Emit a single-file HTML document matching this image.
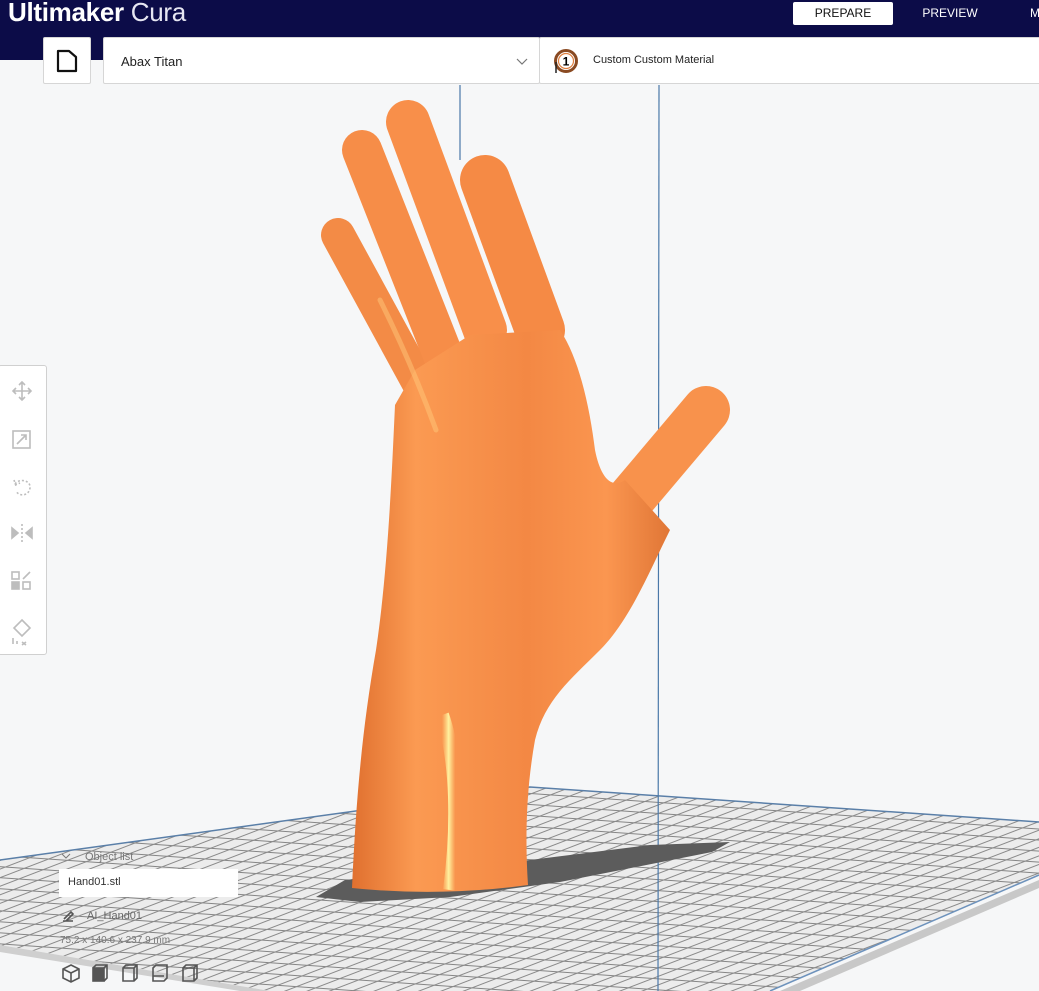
<!DOCTYPE html>
<html><head><meta charset="utf-8"><style>
html,body{margin:0;padding:0;width:1039px;height:991px;overflow:hidden;background:#f6f7f8;font-family:"Liberation Sans",sans-serif}
.hdr{position:absolute;left:0;top:0;width:1039px;height:60px;background:#0c0c48}
.logo{position:absolute;left:8px;top:-3px;color:#fff;font-size:26px;letter-spacing:-0.3px}
.logo b{font-weight:bold}
.logo span{font-weight:normal;color:#e6e6f2}
.tab{position:absolute;top:2px;height:23px;line-height:23px;font-size:12px;text-align:center;color:#fff}
.box{position:absolute;top:37px;height:47px;background:#fff;border:1px solid #d6d6d6;box-sizing:border-box;border-radius:2px}
.lbl{position:absolute;font-size:13px;color:#222;white-space:nowrap}
.tools{position:absolute;left:-2px;top:365px;width:49px;height:290px;background:#fff;border:1px solid #d0d0d0;border-radius:3px;box-sizing:border-box}
</style></head><body>
<svg width="1039" height="991" style="position:absolute;left:0;top:0">
<defs>
<clipPath id="plate"><polygon points="0,860 530,787 1039,822 1039,875 770,991 270,991 0,945"/></clipPath>
<pattern id="ga" width="40" height="11" patternUnits="userSpaceOnUse" patternTransform="translate(0,800) rotate(4)">
<rect x="0" y="0" width="40" height="1" fill="#858585"/></pattern>
<pattern id="gb" width="40" height="8" patternUnits="userSpaceOnUse" patternTransform="translate(0,860) rotate(-21)">
<rect x="0" y="0" width="40" height="1" fill="#8a8a8a"/></pattern>
<linearGradient id="skin" x1="0" y1="0" x2="1" y2="0">
<stop offset="0" stop-color="#e0702f"/><stop offset="0.2" stop-color="#fb9a52"/><stop offset="0.55" stop-color="#f38844"/><stop offset="0.8" stop-color="#fb9650"/><stop offset="1" stop-color="#e07636"/></linearGradient>
<linearGradient id="hl" x1="0" y1="0" x2="1" y2="0"><stop offset="0" stop-color="#ffe590" stop-opacity="0"/><stop offset="0.5" stop-color="#fff2a0"/><stop offset="1" stop-color="#ffe590" stop-opacity="0"/></linearGradient>
</defs>
<polygon points="0,860 530,787 1039,822 1039,875 770,991 270,991 0,945" fill="#ececec"/>
<g clip-path="url(#plate)">
<rect x="0" y="700" width="1039" height="291" fill="url(#ga)"/>
<rect x="0" y="700" width="1039" height="291" fill="url(#gb)"/>
</g>
<polyline points="0,860 530,787 1039,822" fill="none" stroke="#5a7fa8" stroke-width="1.5"/>
<polyline points="1039,875 770,991" fill="none" stroke="#6d92bc" stroke-width="1.5"/>
<polygon points="1039,880 780,991 800,991 1039,888" fill="#c8c8c8"/>
<polygon points="0,945 270,991 240,991 0,952" fill="#cfcfcf"/>
<line x1="460" y1="85" x2="460" y2="160" stroke="#4a78a8" stroke-width="1.2"/>
<line x1="659" y1="85" x2="658" y2="991" stroke="#4a78a8" stroke-width="1.2"/>
<polygon points="316,897 345,880 530,860 650,845 730,842 712,852 560,882 450,897 360,902" fill="#5c5c5c"/>
<g stroke-linecap="round" fill="none">
<line x1="428" y1="400" x2="338" y2="235" stroke-width="34" stroke="#f38b46"/>
<line x1="445" y1="360" x2="362" y2="150" stroke-width="40" stroke="#f68d48"/>
<line x1="485" y1="330" x2="408" y2="122" stroke-width="44" stroke="#f88f4a"/>
<line x1="540" y1="330" x2="485" y2="180" stroke-width="50" stroke="#f58a45"/>
<line x1="630" y1="500" x2="706" y2="410" stroke-width="48" stroke="#f8924c"/>
</g>
<path fill="url(#skin)" d="M352,888 C356,800 362,730 376,650 C388,570 392,470 395,405 L415,370 L470,335 L560,330 C580,360 590,410 595,450 C600,475 610,490 625,480 L670,530 C650,570 630,620 600,650 C570,680 545,700 535,740 C526,790 525,840 528,885 Q440,897 352,888 Z"/>
<path d="M442,715 C458,760 458,830 450,890" stroke="url(#hl)" stroke-width="14" fill="none"/>
<path d="M380,300 C405,350 425,400 436,430" stroke="#ffc77a" stroke-width="5" fill="none" stroke-linecap="round" opacity="0.5"/>
</svg>
<div class="hdr"></div>
<div class="logo"><b>Ultimaker</b> <span>Cura</span></div>
<div class="tab" style="left:793px;width:100px;background:#fff;color:#111;border-radius:2px">PREPARE</div>
<div class="tab" style="left:910px;width:80px">PREVIEW</div>
<div class="tab" style="left:1030px;width:20px;text-align:left">M</div>
<div class="box" style="left:43px;width:48px"><svg width="48" height="47" style="position:absolute;left:-1px;top:-1px"><path d="M15,14 H26 L33,20 V34 H15 Z" fill="none" stroke="#111" stroke-width="2.2" stroke-linejoin="round"/></svg></div>
<div class="box" style="left:103px;width:437px"><div class="lbl" style="left:17px;top:16px">Abax Titan</div><svg width="12" height="8" style="position:absolute;left:412px;top:20px"><path d="M1,1 L6,6 L11,1" fill="none" stroke="#777" stroke-width="1.2"/></svg></div>
<div class="box" style="left:539px;width:510px"><svg width="30" height="30" style="position:absolute;left:13px;top:10px"><circle cx="13" cy="13" r="10.5" fill="#fff" stroke="#8a4a22" stroke-width="3"/><circle cx="13" cy="13" r="7.5" fill="none" stroke="#e08040" stroke-width="1.2"/><text x="13" y="17.5" font-size="12" font-weight="bold" text-anchor="middle" font-family="Liberation Sans">1</text><line x1="3" y1="14" x2="3" y2="25" stroke="#222" stroke-width="1.5"/></svg><div class="lbl" style="left:53px;top:16px;font-size:11px">Custom Custom Material</div></div>
<div class="tools"><svg width="49" height="290" fill="none" stroke="#bdbdbd" stroke-width="1.6">
<path d="M23,16 V34 M14,25 H32 M20,19 L23,16 L26,19 M20,31 L23,34 L26,31 M17,22 L14,25 L17,28 M29,22 L32,25 L29,28"/>
<rect x="14" y="65" width="17" height="17"/><path d="M18,78 L27,69 M22,69 H27 V74"/>
<path d="M15,114 L17,120 M16,119 L21,117 M16,118 C20,112 32,114 31,122 C30,130 20,131 17,125" stroke-dasharray="2 2"/>
<path d="M13,162 L19,167 L13,172 Z M33,162 L27,167 L33,172 Z" fill="#bdbdbd"/><path d="M23,158 V176" stroke-dasharray="2 2"/>
<rect x="13" y="206" width="7" height="7"/><rect x="13" y="216" width="7" height="7" fill="#bdbdbd"/><rect x="24" y="216" width="7" height="7"/><path d="M24,213 L31,206"/>
<path d="M23,254 L31,262 L23,270 L15,262 Z M14,272 V278 M18,275 V278 M23,276 L27,279 M27,276 L23,279"/>
</svg></div>
<svg width="20" height="10" style="position:absolute;left:60px;top:852px"><path d="M2,2 L6,6 L10,2" fill="none" stroke="#777" stroke-width="1"/></svg>
<div class="lbl" style="left:85px;top:851px;font-size:11px;color:#777">Object list</div>
<div style="position:absolute;left:59px;top:869px;width:179px;height:28px;background:#fff"></div>
<div class="lbl" style="left:68px;top:876px;font-size:11px;color:#333">Hand01.stl</div>
<svg width="16" height="14" style="position:absolute;left:61px;top:909px"><path d="M2,12 H12 M3,10 L10,3 L12,5 L5,12" fill="none" stroke="#555" stroke-width="1.6"/></svg>
<div class="lbl" style="left:87px;top:910px;font-size:11px;color:#666">AI_Hand01</div>
<div class="lbl" style="left:60px;top:935px;font-size:10px;color:#777">75.2 x 140.6 x 237.9 mm</div>
<svg width="150" height="24" style="position:absolute;left:60px;top:962px" fill="none" stroke="#555" stroke-width="1.6">
<path d="M11,3 L19,7 V16 L11,20 L3,16 V7 Z M3,7 L11,11 L19,7 M11,11 V20"/>
<rect x="33" y="6" width="11" height="13" fill="#555"/><path d="M33,6 L36,3 H47 V16 L44,19 M44,6 L47,3"/>
<path d="M63,6 L66,3 H77 V16 L74,19 H63 Z M63,6 H74 V19 M74,6 L77,3"/>
<path d="M93,6 L96,3 H107 V16 L104,19 H93 Z M93,14 H104"/>
<path d="M123,6 L126,3 H137 V16 L134,19 H123 Z M123,6 H134 V19 M134,6 L137,3"/>
</svg>
</body></html>
